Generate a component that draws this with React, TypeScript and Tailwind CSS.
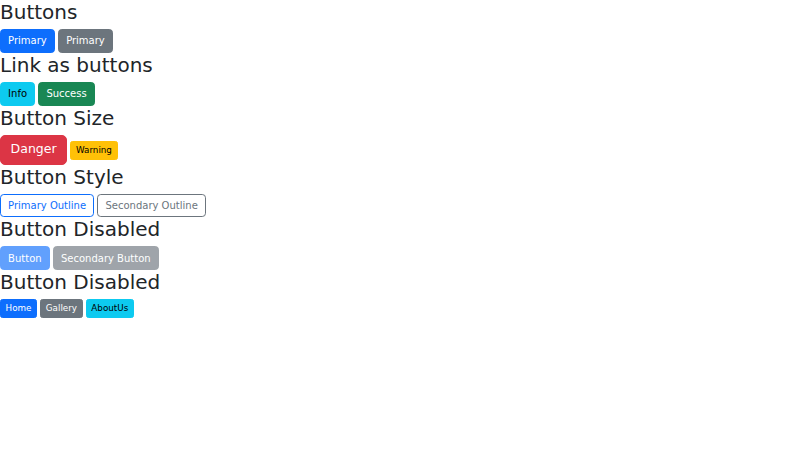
import React from 'react';

type Size = 'md' | 'lg' | 'sm';

const sizes: Record<Size, string> = {
  md: 'h-[23.75px] px-[7.1px] text-[10px] rounded-[3.75px]',
  lg: 'h-[30px] px-[9.6px] text-[12.5px] rounded-[5px]',
  sm: 'h-[19.4px] px-[4.6px] text-[8.75px] rounded-[2.5px]',
};

const variants: Record<string, string> = {
  primary: 'bg-[#0d6efd] border-[#0d6efd] text-white',
  secondary: 'bg-[#6c757d] border-[#6c757d] text-white',
  info: 'bg-[#0dcaf0] border-[#0dcaf0] text-black',
  success: 'bg-[#198754] border-[#198754] text-white',
  danger: 'bg-[#dc3545] border-[#dc3545] text-white',
  warning: 'bg-[#ffc107] border-[#ffc107] text-black',
  'outline-primary': 'bg-white border-[#0d6efd] text-[#0d6efd]',
  'outline-secondary': 'bg-white border-[#6c757d] text-[#6c757d]',
};

const Btn = ({
  children,
  variant = 'primary',
  size = 'md',
  disabled = false,
}: {
  children: React.ReactNode;
  variant?: string;
  size?: Size;
  disabled?: boolean;
}) => (
  <button
    disabled={disabled}
    className={`inline-flex items-center border leading-[1.5] whitespace-nowrap ${sizes[size]} ${variants[variant]} ${
      disabled ? 'opacity-65' : ''
    }`}
  >
    {children}
  </button>
);

// heading + row of buttons
const Section = ({ title, children }: { title: string; children: React.ReactNode }) => (
  <div>
    <h2 className="text-[20px] leading-[24px] font-normal mb-[5px] text-[#212529]">{title}</h2>
    <div className="flex items-baseline gap-[3.2px]">{children}</div>
  </div>
);

export default function App() {
  return (
    <div className="w-[800px] h-[450px] bg-white font-['DejaVu_Sans',sans-serif] text-[10px] leading-[15px] text-[#212529]">
      <Section title="Buttons">
        <Btn>Primary</Btn>
        <Btn variant="secondary">Primary</Btn>
      </Section>

      <Section title="Link as buttons">
        <Btn variant="info">Info</Btn>
        <Btn variant="success">Success</Btn>
      </Section>

      <Section title="Button Size">
        <Btn variant="danger" size="lg">Danger</Btn>
        <Btn variant="warning" size="sm">Warning</Btn>
      </Section>

      <Section title="Button Style">
        <Btn variant="outline-primary">Primary Outline</Btn>
        <Btn variant="outline-secondary">Secondary Outline</Btn>
      </Section>

      <Section title="Button Disabled">
        <Btn disabled>Button</Btn>
        <Btn variant="secondary" disabled>Secondary Button</Btn>
      </Section>

      <Section title="Button Disabled">
        <Btn size="sm">Home</Btn>
        <Btn variant="secondary" size="sm">Gallery</Btn>
        <Btn variant="info" size="sm">AboutUs</Btn>
      </Section>
    </div>
  );
}
